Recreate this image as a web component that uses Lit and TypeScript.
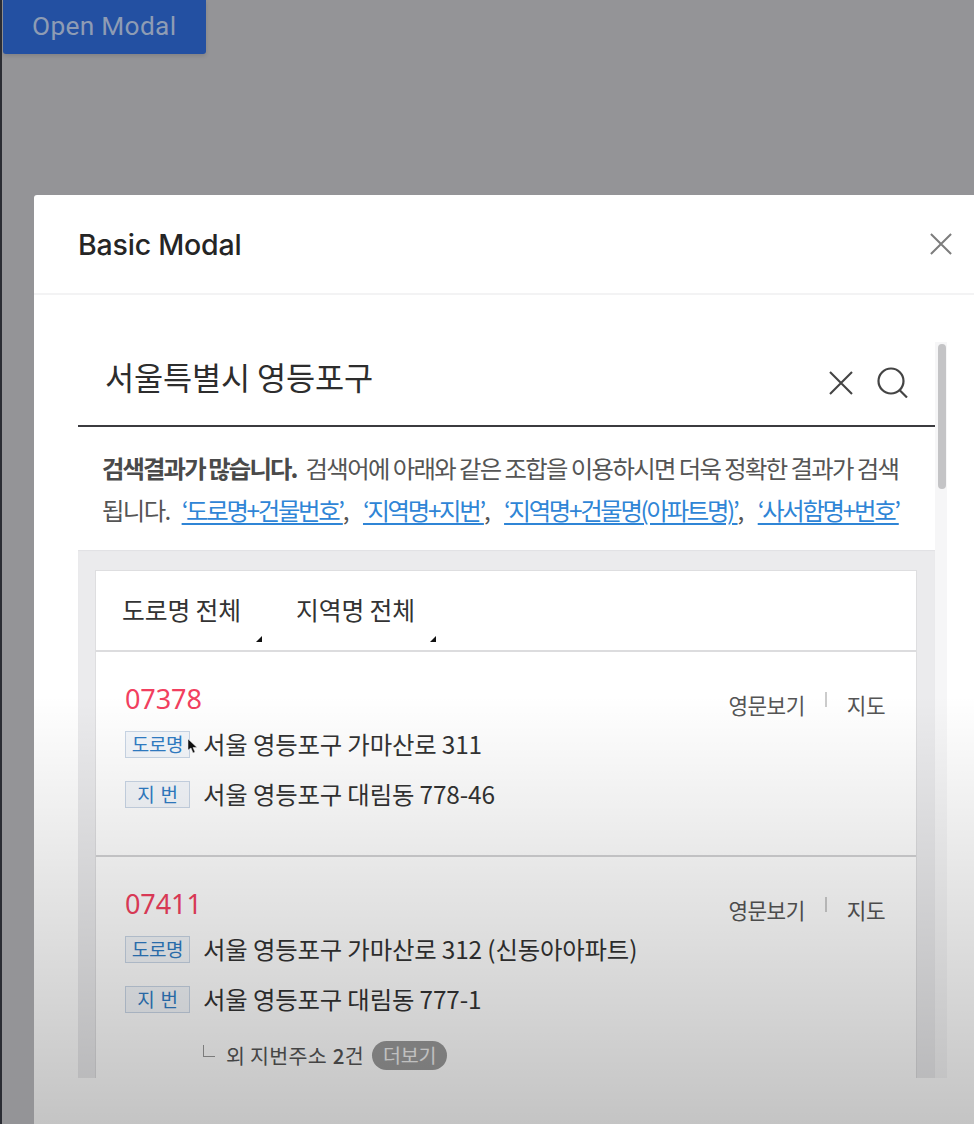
import { LitElement, html, css, svg } from "lit";
import { customElement } from "lit/decorators.js";

@customElement("app-root")
export class AppRoot extends LitElement {
  static styles = css`
    :host { display: block; height: 1124px; overflow: hidden; position: relative; background: #949497; font-family: "Noto Sans CJK KR", "Noto Sans", sans-serif; color: #333; }
    .strip { position: absolute; left: 0; top: 0; bottom: 0; width: 2px; background: #2a2c33; }
    .btn { display: flex; align-items: center; box-sizing: border-box; margin-left: 3px; width: 203px; height: 54px; padding: 0 29px; background: #2350a2; color: #8e9cb4; border-radius: 0 0 3px 3px; font: 26.3px/1 Roboto, sans-serif; letter-spacing: .3px; padding-bottom: 2px; box-shadow: 0 2px 4px rgba(0,0,0,.12); }
    .modal { position: relative; overflow: hidden; margin: 141px 0 0 34px; width: 940px; height: 929px; background: #fff; border-radius: 3px 0 0 0; }
    .mh { height: 100px; box-sizing: border-box; display: flex; align-items: center; justify-content: space-between; padding: 0 22px 0 44px; border-bottom: 2px solid #f3f3f4; }
    .mh h2 { margin: 0; font: 500 28.5px/1 Inter, sans-serif; color: #252525; position: relative; top: 1px; letter-spacing: -.2px; }
    .mb { display: flex; padding: 47px 0 0 44px; }
    .frame { width: 857px; }
    .search { height: 85px; box-sizing: border-box; border-bottom: 2px solid #3b3b3f; display: flex; align-items: center; justify-content: space-between; padding: 0 27px 12px 27px; }
    .q { font-size: 31.7px; line-height: 1; color: #2d2d2d; letter-spacing: -.15px; position: relative; top: -1px; }
    .icons { display: flex; align-items: center; gap: 24px; position: relative; top: 5px; }
    .notice { box-sizing: border-box; height: 123px; padding: 20px 0 0 24px; font-size: 24.4px; line-height: 42px; color: #555; letter-spacing: -1.62px; white-space: nowrap; }
    .notice b { font-weight: 700; color: #4a4a4a; margin-right: 9px; letter-spacing: -1.9px; }
    .notice .end { margin-right: 12px; }
    .notice a { color: #2f85d6; text-decoration: underline; text-underline-offset: 3px; text-decoration-thickness: 2px; letter-spacing: -2.3px; }
    .notice .c { margin-right: 15px; }
    .panel { background: #ebebed; height: 528px; padding: 20px 18px 0 17px; box-sizing: border-box; overflow: hidden; box-shadow: inset 0 1px 1px #e2e2e4; }
    .card { background: #fff; height: 600px; border: 1px solid #dedee0; }
    .tabs { height: 81px; box-sizing: border-box; display: flex; border-bottom: 2px solid #dcdcde; }
    .tab { width: 174px; box-sizing: border-box; padding: 23px 0 0 26px; position: relative; font-size: 24.8px; line-height: 30px; color: #333; letter-spacing: -.1px; }
    .tab::after { content: ""; position: absolute; left: 160px; bottom: 8px; border-style: solid; border-width: 0 0 6px 6px; border-color: transparent transparent #111 transparent; }
    .item { height: 205px; box-sizing: border-box; position: relative; padding: 29px 0 0 29px; border-bottom: 2px solid #d3d3d5; }
    .item.last { border-bottom: 0; height: 260px; }
    .zip { font: 400 27px/36px "Noto Sans", sans-serif; color: #f23f5f; letter-spacing: -.1px; }
    .links { position: absolute; right: 31px; top: 38px; display: flex; align-items: center; font-size: 21.3px; line-height: 30px; color: #555; letter-spacing: -.5px; }
    .sep { width: 2px; height: 15px; background: #ccc; margin: 0 20px; position: relative; top: -6px; }
    .row { display: flex; align-items: center; height: 50px; }
    .row.first { margin-top: 5px; height: 46px; margin-bottom: 2px; }
    .row.first .addr, .row.first .tag { position: relative; top: -1px; }
    .row.second { margin-top: -1px; }
    .tag { box-sizing: border-box; width: 65px; height: 27px; background: #f4f7fb; border: 1.5px solid #c9d6e6; color: #2f7cc4; font-size: 19px; line-height: 23px; text-align: center; margin-right: 13px; letter-spacing: -.3px; flex: none; }
    .tag.sp { word-spacing: 2px; }
    .addr { font-size: 24.4px; line-height: 30px; color: #333; letter-spacing: -.15px; white-space: nowrap; }
    .more { display: flex; align-items: center; margin: 16px 0 0 78px; font-size: 20.6px; line-height: 30px; color: #555; letter-spacing: .25px; }
    .more .corner { display: inline-block; width: 11px; height: 11px; border-left: 1.5px solid #999; border-bottom: 1.5px solid #999; margin-right: 11px; position: relative; top: -4px; flex: none; }
    .num { font-weight: 500; margin-left: 6px; }
    .pill { background: #9a9a9a; color: #eee; border-radius: 15px; height: 29px; line-height: 27px; width: 75px; text-align: center; margin-left: 8px; font-size: 19.5px; letter-spacing: -.2px; }
    .sb { width: 12px; margin-left: 0; height: 736px; position: relative; background: #f6f6f7; }
    .thumb { position: absolute; left: 3px; top: 2px; width: 8px; height: 145px; border-radius: 4px; background: #c4c4c6; }
    .fade { position: absolute; left: 0; right: 0; top: 500px; bottom: 0; pointer-events: none; background: linear-gradient(rgba(0,0,0,0), rgba(0,0,0,.23)); }
    .cursor { position: absolute; left: 188px; top: 739px; }
  `;

  private x(size: number, color: string, w: number) {
    return html`<svg width=${size} height=${size} viewBox="0 0 24 24" fill="none" stroke=${color} stroke-width=${w}>${svg`<path d="M1 1 L23 23 M23 1 L1 23"/>`}</svg>`;
  }

  private item(zip: string, road: string, lot: string, more: boolean) {
    return html`<div class="item ${more ? "last" : ""}">
      <div class="zip">${zip}</div>
      <div class="links"><span>영문보기</span><i class="sep"></i><span>지도</span></div>
      <div class="row first"><span class="tag">도로명</span><span class="addr">${road}</span></div>
      <div class="row second"><span class="tag sp">지 번</span><span class="addr">${lot}</span></div>
      ${more ? html`<div class="more"><i class="corner"></i>외 지번주소<span class="num">2</span>건<span class="pill">더보기</span></div>` : ""}
    </div>`;
  }

  render() {
    return html`
      <div class="strip"></div>
      <div class="btn">Open Modal</div>
      <div class="modal">
        <div class="mh"><h2>Basic Modal</h2>${this.x(22, "#7d7d7d", 2.2)}</div>
        <div class="mb">
          <div class="frame">
            <div class="search">
              <span class="q">서울특별시 영등포구</span>
              <span class="icons">
                ${this.x(24, "#444", 2.1)}
                <svg width="31" height="31" viewBox="0 0 31 31" fill="none" stroke="#444" stroke-width="2.2"><circle cx="14" cy="14" r="12.5"/><path d="M22.5 23 L30 30.5"/></svg>
              </span>
            </div>
            <div class="notice"><b>검색결과가 많습니다.</b>검색어에 아래와 같은 조합을 이용하시면 더욱 정확한 결과가 검색<br/><span class="end">됩니다.</span><a>‘도로명+건물번호’</a><span class="c">,</span><a>‘지역명+지번’</a><span class="c">,</span><a>‘지역명+건물명(아파트명)’</a><span class="c">,</span><a>‘사서함명+번호’</a></div>
            <div class="panel">
              <div class="card">
                <div class="tabs"><div class="tab">도로명 전체</div><div class="tab">지역명 전체</div></div>
                ${this.item("07378", "서울 영등포구 가마산로 311", "서울 영등포구 대림동 778-46", false)}
                ${this.item("07411", "서울 영등포구 가마산로 312 (신동아아파트)", "서울 영등포구 대림동 777-1", true)}
              </div>
            </div>
          </div>
          <div class="sb"><div class="thumb"></div></div>
        </div>
        <div class="fade"></div>
      </div>
      <svg class="cursor" width="10" height="16" viewBox="0 0 10 16"><path d="M0 0 L0 11 L3 9 L5 14 L7 13 L5 8.5 L9 8.5 Z" fill="#111" stroke="#eee" stroke-width=".5"/></svg>
    `;
  }
}
